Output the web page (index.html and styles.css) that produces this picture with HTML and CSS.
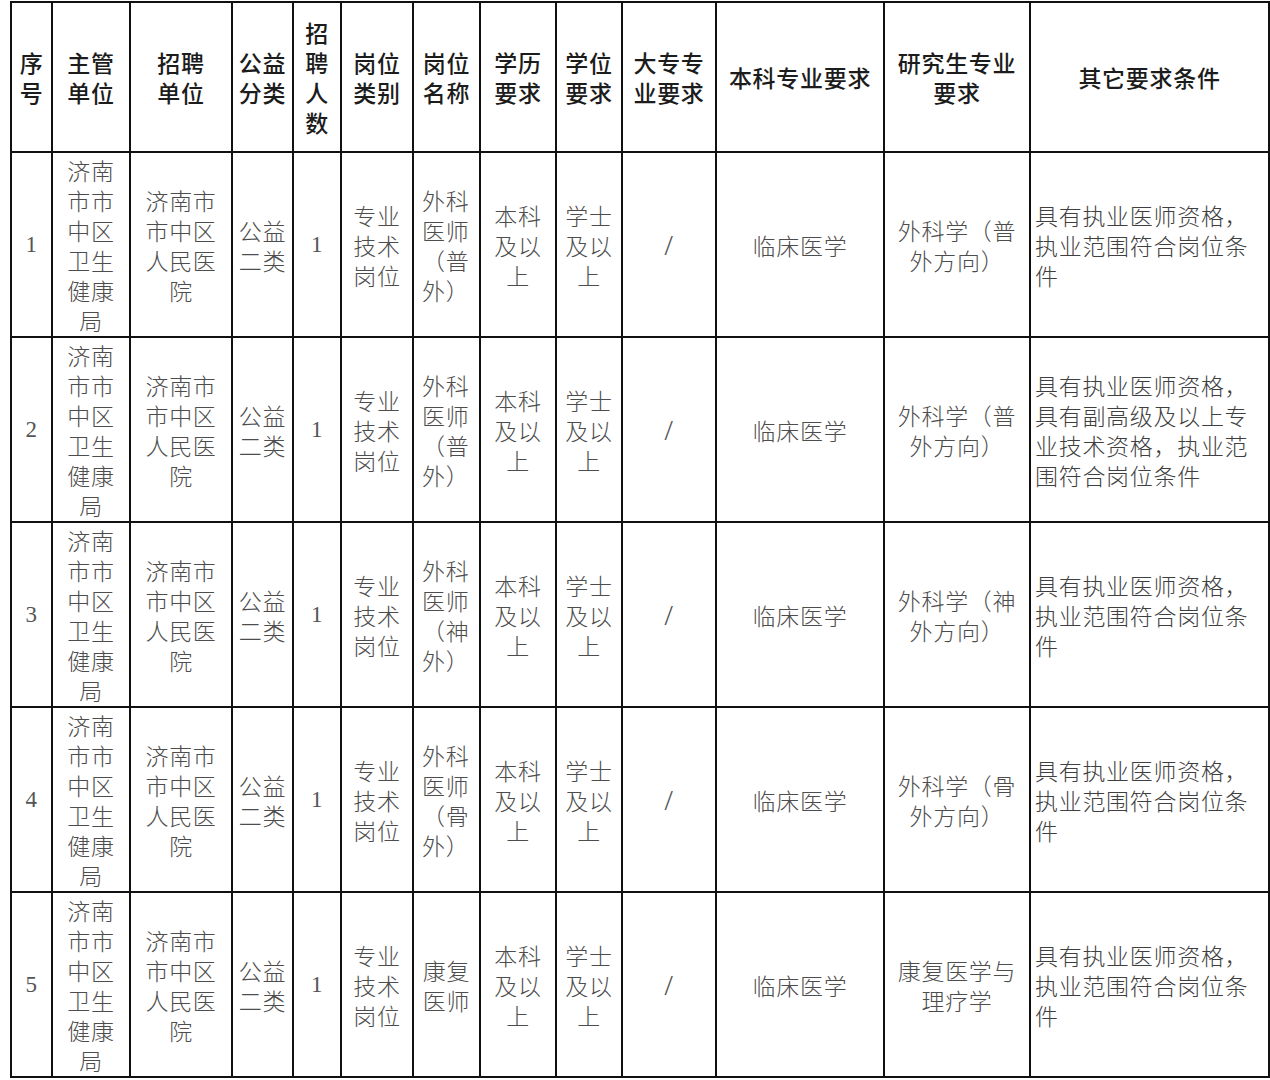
FILE: index.html
```html
<!DOCTYPE html>
<html lang="zh-CN">
<head>
<meta charset="utf-8">
<title>招聘岗位表</title>
<link rel="stylesheet" href="styles.css">
</head>
<body>
<table class="jobs">
  <colgroup>
    <col class="c1"><col class="c2"><col class="c3"><col class="c4"><col class="c5"><col class="c6"><col class="c7"><col class="c8"><col class="c9"><col class="c10"><col class="c11"><col class="c12"><col class="c13">
  </colgroup>
  <thead>
    <tr class="head">
      <th>序<br>号</th>
      <th>主管<br>单位</th>
      <th>招聘<br>单位</th>
      <th>公益<br>分类</th>
      <th>招<br>聘<br>人<br>数</th>
      <th>岗位<br>类别</th>
      <th>岗位<br>名称</th>
      <th>学历<br>要求</th>
      <th>学位<br>要求</th>
      <th>大专专<br>业要求</th>
      <th>本科专业要求</th>
      <th>研究生专业<br>要求</th>
      <th>其它要求条件</th>
    </tr>
  </thead>
  <tbody>
    <tr>
      <td class="num">1</td>
      <td>济南<br>市市<br>中区<br>卫生<br>健康<br>局</td>
      <td>济南市<br>市中区<br>人民医<br>院</td>
      <td>公益<br>二类</td>
      <td class="num">1</td>
      <td>专业<br>技术<br>岗位</td>
      <td class="left">外科<br>医师<br>（普<br>外）</td>
      <td>本科<br>及以<br>上</td>
      <td>学士<br>及以<br>上</td>
      <td class="slash">/</td>
      <td>临床医学</td>
      <td>外科学（普<br>外方向）</td>
      <td class="other">具有执业医师资格，<br>执业范围符合岗位条<br>件</td>
    </tr>
    <tr>
      <td class="num">2</td>
      <td>济南<br>市市<br>中区<br>卫生<br>健康<br>局</td>
      <td>济南市<br>市中区<br>人民医<br>院</td>
      <td>公益<br>二类</td>
      <td class="num">1</td>
      <td>专业<br>技术<br>岗位</td>
      <td class="left">外科<br>医师<br>（普<br>外）</td>
      <td>本科<br>及以<br>上</td>
      <td>学士<br>及以<br>上</td>
      <td class="slash">/</td>
      <td>临床医学</td>
      <td>外科学（普<br>外方向）</td>
      <td class="other">具有执业医师资格，<br>具有副高级及以上专<br>业技术资格，执业范<br>围符合岗位条件</td>
    </tr>
    <tr>
      <td class="num">3</td>
      <td>济南<br>市市<br>中区<br>卫生<br>健康<br>局</td>
      <td>济南市<br>市中区<br>人民医<br>院</td>
      <td>公益<br>二类</td>
      <td class="num">1</td>
      <td>专业<br>技术<br>岗位</td>
      <td class="left">外科<br>医师<br>（神<br>外）</td>
      <td>本科<br>及以<br>上</td>
      <td>学士<br>及以<br>上</td>
      <td class="slash">/</td>
      <td>临床医学</td>
      <td>外科学（神<br>外方向）</td>
      <td class="other">具有执业医师资格，<br>执业范围符合岗位条<br>件</td>
    </tr>
    <tr>
      <td class="num">4</td>
      <td>济南<br>市市<br>中区<br>卫生<br>健康<br>局</td>
      <td>济南市<br>市中区<br>人民医<br>院</td>
      <td>公益<br>二类</td>
      <td class="num">1</td>
      <td>专业<br>技术<br>岗位</td>
      <td class="left">外科<br>医师<br>（骨<br>外）</td>
      <td>本科<br>及以<br>上</td>
      <td>学士<br>及以<br>上</td>
      <td class="slash">/</td>
      <td>临床医学</td>
      <td>外科学（骨<br>外方向）</td>
      <td class="other">具有执业医师资格，<br>执业范围符合岗位条<br>件</td>
    </tr>
    <tr>
      <td class="num">5</td>
      <td>济南<br>市市<br>中区<br>卫生<br>健康<br>局</td>
      <td>济南市<br>市中区<br>人民医<br>院</td>
      <td>公益<br>二类</td>
      <td class="num">1</td>
      <td>专业<br>技术<br>岗位</td>
      <td>康复<br>医师</td>
      <td>本科<br>及以<br>上</td>
      <td>学士<br>及以<br>上</td>
      <td class="slash">/</td>
      <td>临床医学</td>
      <td>康复医学与<br>理疗学</td>
      <td class="other">具有执业医师资格，<br>执业范围符合岗位条<br>件</td>
    </tr>
  </tbody>
</table>
</body>
</html>
```

FILE: styles.css
```css
html, body {
  margin: 0;
  padding: 0;
  background: #ffffff;
  overflow: hidden;
}

body {
  padding-top: 1px;
}

.jobs {
  margin-left: 10px;
  width: 1260px;
  table-layout: fixed;
  border-collapse: collapse;
  font-family: "Noto Sans CJK SC", "Noto Sans", sans-serif;
}

.c1 { width: 41px; }
.c2 { width: 78px; }
.c3 { width: 102px; }
.c4 { width: 61px; }
.c5 { width: 48px; }
.c6 { width: 72px; }
.c7 { width: 67px; }
.c8 { width: 76px; }
.c9 { width: 66px; }
.c10 { width: 94px; }
.c11 { width: 168px; }
.c12 { width: 146px; }
.c13 { width: 239px; }

.jobs th,
.jobs td {
  border: 2px solid #111111;
  padding: 0 1px;
  text-align: center;
  vertical-align: middle;
  white-space: nowrap;
  font-size: 23px;
  line-height: 30px;
  letter-spacing: 0.7px;
}

.jobs th {
  height: 148px;
  font-weight: 500;
  color: #1c1c1c;
}

.jobs tbody tr {
  height: 185px;
}

.jobs td {
  font-weight: 300;
  color: #4d4d4d;
}

.jobs td.num {
  font-family: "Liberation Serif", "DejaVu Serif", serif;
  font-size: 23px;
  color: #555555;
}

.jobs td.slash {
  font-family: "Liberation Serif", "DejaVu Serif", serif;
  font-size: 30px;
  color: #555555;
}

.jobs td.left {
  text-align: left;
  padding-left: 8px;
}

.jobs td.other {
  text-align: left;
  padding-left: 4px;
  color: #3f3f3f;
}
```
